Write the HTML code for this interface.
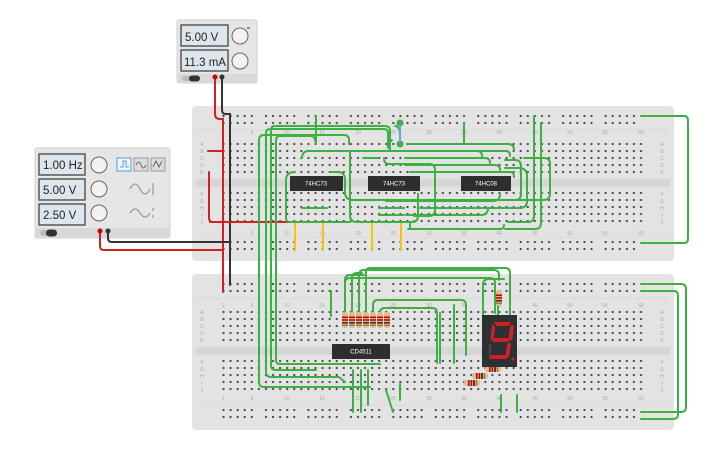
<!DOCTYPE html>
<html><head><meta charset="utf-8"><style>
html,body{margin:0;padding:0;background:#fff;width:725px;height:453px;overflow:hidden}
svg{display:block}
</style></head><body>
<svg width="725" height="453" viewBox="0 0 725 453" xmlns="http://www.w3.org/2000/svg" font-family="Liberation Sans, sans-serif">
<defs>
<pattern id="h" x="220" y="141" width="7.076" height="7" patternUnits="userSpaceOnUse"><circle cx="3.5" cy="3" r="1.15" fill="#4a4a4a"/></pattern>
<pattern id="r" x="220" y="113" width="42.46" height="7" patternUnits="userSpaceOnUse">
<circle cx="3.5" cy="3" r="1.15" fill="#4a4a4a"/><circle cx="10.58" cy="3" r="1.15" fill="#4a4a4a"/><circle cx="17.65" cy="3" r="1.15" fill="#4a4a4a"/><circle cx="24.73" cy="3" r="1.15" fill="#4a4a4a"/><circle cx="31.8" cy="3" r="1.15" fill="#4a4a4a"/></pattern>
<pattern id="h2" x="220" y="309" width="7.076" height="7" patternUnits="userSpaceOnUse"><circle cx="3.5" cy="3" r="1.15" fill="#4a4a4a"/></pattern>
<pattern id="r2" x="220" y="281" width="42.46" height="7" patternUnits="userSpaceOnUse">
<circle cx="3.5" cy="3" r="1.15" fill="#4a4a4a"/><circle cx="10.58" cy="3" r="1.15" fill="#4a4a4a"/><circle cx="17.65" cy="3" r="1.15" fill="#4a4a4a"/><circle cx="24.73" cy="3" r="1.15" fill="#4a4a4a"/><circle cx="31.8" cy="3" r="1.15" fill="#4a4a4a"/></pattern>
<g id="res"><rect x="-3" y="-8" width="6" height="16" rx="2.5" fill="#dcbc8c"/><rect x="-3" y="-3.5" width="6" height="1.6" fill="#c00"/><rect x="-3" y="-0.8" width="6" height="1.6" fill="#c00"/><rect x="-3" y="2" width="6" height="1.6" fill="#333"/><rect x="-3" y="4.6" width="6" height="1.3" fill="#a07030"/></g>
<g id="resh"><rect x="-8" y="-3" width="16" height="6" rx="2.5" fill="#dcbc8c"/><rect x="-4" y="-3" width="1.6" height="6" fill="#c00"/><rect x="-1.4" y="-3" width="1.6" height="6" fill="#c00"/><rect x="1.2" y="-3" width="1.6" height="6" fill="#222"/><rect x="3.8" y="-3" width="1.3" height="6" fill="#a07030"/></g>
</defs>

<rect x="192" y="106" width="482" height="155" rx="4" fill="#e3e3e3"/>
<rect x="192" y="274" width="482" height="156" rx="4" fill="#e3e3e3"/>
<line x1="196" y1="183" x2="670" y2="183" stroke="#d6d6d6" stroke-width="8"/>
<line x1="196" y1="351" x2="670" y2="351" stroke="#d6d6d6" stroke-width="8"/>
<line x1="196" y1="130" x2="670" y2="130" stroke="#d8d8d8"/>
<line x1="196" y1="237" x2="670" y2="237" stroke="#d8d8d8"/>
<line x1="196" y1="298" x2="670" y2="298" stroke="#d8d8d8"/>
<line x1="196" y1="405" x2="670" y2="405" stroke="#d8d8d8"/>
<rect x="220" y="141" width="424" height="35" fill="url(#h)"/>
<rect x="220" y="191" width="424" height="35" fill="url(#h)"/>
<rect x="220" y="113" width="424" height="14" fill="url(#r)"/>
<rect x="220" y="241" width="424" height="14" fill="url(#r)"/>
<rect x="220" y="309" width="424" height="35" fill="url(#h2)"/>
<rect x="220" y="359" width="424" height="35" fill="url(#h2)"/>
<rect x="220" y="281" width="424" height="14" fill="url(#r2)"/>
<rect x="220" y="409" width="424" height="14" fill="url(#r2)"/>
<g font-size="5" fill="#aaa" text-anchor="middle">
<text x="223" y="134">1</text><text x="252" y="134">5</text><text x="287" y="134">10</text><text x="322" y="134">15</text><text x="358" y="134">20</text><text x="393" y="134">25</text><text x="429" y="134">30</text><text x="464" y="134">35</text><text x="499" y="134">40</text><text x="535" y="134">45</text><text x="570" y="134">50</text><text x="605" y="134">55</text><text x="641" y="134">60</text>
<text x="223" y="235">1</text><text x="252" y="235">5</text><text x="287" y="235">10</text><text x="322" y="235">15</text><text x="358" y="235">20</text><text x="393" y="235">25</text><text x="429" y="235">30</text><text x="464" y="235">35</text><text x="499" y="235">40</text><text x="535" y="235">45</text><text x="570" y="235">50</text><text x="605" y="235">55</text><text x="641" y="235">60</text>
<text x="223" y="307">1</text><text x="252" y="307">5</text><text x="287" y="307">10</text><text x="322" y="307">15</text><text x="358" y="307">20</text><text x="393" y="307">25</text><text x="429" y="307">30</text><text x="464" y="307">35</text><text x="499" y="307">40</text><text x="535" y="307">45</text><text x="570" y="307">50</text><text x="605" y="307">55</text><text x="641" y="307">60</text>
<text x="223" y="400">1</text><text x="252" y="400">5</text><text x="287" y="400">10</text><text x="322" y="400">15</text><text x="358" y="400">20</text><text x="393" y="400">25</text><text x="429" y="400">30</text><text x="464" y="400">35</text><text x="499" y="400">40</text><text x="535" y="400">45</text><text x="570" y="400">50</text><text x="605" y="400">55</text><text x="641" y="400">60</text>
</g>
<g font-size="5" fill="#aaa" text-anchor="middle">
<text x="202" y="146">A</text><text x="202" y="153">B</text><text x="202" y="160">C</text><text x="202" y="167">D</text><text x="202" y="174">E</text><text x="202" y="196">F</text><text x="202" y="203">G</text><text x="202" y="210">H</text><text x="202" y="217">I</text><text x="202" y="224">J</text>
<text x="662" y="146">A</text><text x="662" y="153">B</text><text x="662" y="160">C</text><text x="662" y="167">D</text><text x="662" y="174">E</text><text x="662" y="196">F</text><text x="662" y="203">G</text><text x="662" y="210">H</text><text x="662" y="217">I</text><text x="662" y="224">J</text>
<text x="202" y="314">A</text><text x="202" y="321">B</text><text x="202" y="328">C</text><text x="202" y="335">D</text><text x="202" y="342">E</text><text x="202" y="364">F</text><text x="202" y="371">G</text><text x="202" y="378">H</text><text x="202" y="385">I</text><text x="202" y="392">J</text>
<text x="662" y="314">A</text><text x="662" y="321">B</text><text x="662" y="328">C</text><text x="662" y="335">D</text><text x="662" y="342">E</text><text x="662" y="364">F</text><text x="662" y="371">G</text><text x="662" y="378">H</text><text x="662" y="385">I</text><text x="662" y="392">J</text>
</g>

<rect x="177" y="20" width="80" height="63" rx="2" fill="#e6e6e6" stroke="#d0d0d0"/>
<rect x="181" y="25" width="47" height="21" fill="#dce6ec" stroke="#444" stroke-width="1.3"/>
<rect x="181" y="50" width="47" height="21" fill="#dce6ec" stroke="#444" stroke-width="1.3"/>
<text x="185" y="41" font-size="11.5" fill="#222">5.00 V</text>
<text x="184" y="66" font-size="11.5" fill="#222">11.3 mA</text>
<circle cx="240" cy="36" r="8" fill="#f2f2f2" stroke="#666"/><circle cx="240" cy="61" r="8" fill="#f2f2f2" stroke="#666"/>
<rect x="247" y="27" width="3" height="2" fill="#3c3"/>
<rect x="178" y="74" width="78" height="9" fill="#d8d8d8"/>
<rect x="182" y="76" width="18" height="5" rx="2.5" fill="#bbb"/><rect x="189" y="75.5" width="11" height="6" rx="3" fill="#333"/>

<rect x="35" y="148" width="135" height="90" rx="2" fill="#e6e6e6" stroke="#d0d0d0"/>
<rect x="39" y="154" width="46" height="21" fill="#dce6ec" stroke="#444" stroke-width="1.3"/>
<rect x="39" y="179" width="46" height="21" fill="#dce6ec" stroke="#444" stroke-width="1.3"/>
<rect x="39" y="204" width="46" height="21" fill="#dce6ec" stroke="#444" stroke-width="1.3"/>
<text x="43" y="169" font-size="11.5" fill="#222">1.00 Hz</text>
<text x="43" y="194" font-size="11.5" fill="#222">5.00 V</text>
<text x="43" y="219" font-size="11.5" fill="#222">2.50 V</text>
<circle cx="99" cy="165" r="8" fill="#f2f2f2" stroke="#666"/><circle cx="99" cy="189" r="8" fill="#f2f2f2" stroke="#666"/><circle cx="99" cy="213" r="8" fill="#f2f2f2" stroke="#666"/>
<rect x="117" y="158" width="14" height="13" fill="#eef6fb" stroke="#4aa3d8"/>
<rect x="134" y="158" width="14" height="13" fill="#ddd" stroke="#999"/>
<rect x="151" y="158" width="14" height="13" fill="#ddd" stroke="#999"/>
<path d="M120 167h3v-6h3v6h3" fill="none" stroke="#4aa3d8"/>
<path d="M136 165q3-6 5 0t5 0" fill="none" stroke="#666"/>
<path d="M153 167l3-6l3 6l3-6" fill="none" stroke="#666"/>
<path d="M130 189q5-10 10 0t10 0" fill="none" stroke="#888"/><path d="M153 183v12" stroke="#888"/>
<path d="M130 213q5-8 10 0t10 0" fill="none" stroke="#888"/><path d="M153 208v3M153 215v3" stroke="#888"/>
<rect x="36" y="228" width="133" height="10" fill="#d8d8d8"/>
<rect x="40" y="230" width="17" height="6" rx="3" fill="#bbb"/><rect x="46" y="229.5" width="11" height="7" rx="3.5" fill="#333"/>

<g fill="none" stroke-width="2" stroke-linecap="round">
<path d="M215 78V114q0 5 5 5h3V292" stroke="#d42020"/>
<path d="M222 78V110q0 4 4 4h4V285" stroke="#333"/>
<path d="M100 232V246q0 4 4 4h119" stroke="#d42020"/>
<path d="M108 232V238q0 4 4 4h118" stroke="#333"/>
<path d="M208 151h15" stroke="#d42020"/>
<path d="M209 172V218q0 4 4 4h103" stroke="#d42020"/>
<path d="M210 222h10" stroke="#d42020"/>
</g>
<circle cx="215" cy="77" r="2.5" fill="#c00"/><circle cx="222" cy="77" r="2.5" fill="#333"/>
<circle cx="100" cy="231" r="2.5" fill="#c00"/><circle cx="108" cy="231" r="2.5" fill="#333"/>

<g stroke="#f1c40f" stroke-width="2"><path d="M295 222V251M323 222V251M372 222V251M401 222V251"/></g>

<g fill="none" stroke="#3cb043" stroke-width="2" stroke-linecap="round" stroke-linejoin="round">
<path d="M259 145V140q0-5 5-5h80q5 0 5 5v4"/>
<path d="M259 145V382q0 5 5 5h106"/>
<path d="M266 138V133q0-4 4-4h114q4 0 4 4v15"/>
<path d="M266 138V372q0 5 5 5h68l6 5"/>
<path d="M271 135V130q0-4 4-4h110q5 0 5 5v20"/>
<path d="M271 135V365q0 5 5 5h40"/>
<path d="M276 143V140q0-4 4-4h31q4 0 4 5"/>
<path d="M276 143V360q0 4 4 4h100"/>
<path d="M316 116V144"/>
<path d="M395 126q5 0 5 10v8"/>
<path d="M388 144l4-4"/>
<path d="M295 172q-9 0-9 8v38q0 4 4 4h60"/>
<path d="M330 172h8q7 0 7 8v12q0 8 8 8h190q7 0 7-6v-30q0-6-6-6h-20"/>
<path d="M302 158q0-7 7-7h90"/>
<path d="M400 151h106q4 0 4 5"/>
<path d="M350 151V215q0 7 7 7h55q6 0 6-6v-22"/>
<path d="M363 158h15"/>
<path d="M384 158q0 6 5 6h40q6 0 6 6v40q0 6-6 6h-15"/>
<path d="M302 208h25"/>
<path d="M316 222h20"/>
<path d="M386 201h25M379 208h25M379 215h25"/>
<path d="M402 151h75q5 0 5 5"/>
<path d="M405 158h80q5 0 5 5"/>
<path d="M405 165h90q5 0 5 5"/>
<path d="M410 172h100q4 0 4 5"/>
<path d="M408 144h100q6 0 6 6"/>
<path d="M464 123V144"/>
<path d="M505 160h10q6 0 6 6v28q0 6-6 6h-70"/>
<path d="M505 168h14q8 0 8 8v25q0 7-7 7h-100"/>
<path d="M488 208q0 7-7 7h-75"/>
<path d="M500 194q0 7-7 7h-100"/>
<path d="M508 222h20q6 0 6-6V116"/>
<path d="M505 229h30q6 0 6-6V123"/>
<path d="M408 229h20"/>
<path d="M641 116h43q4 0 4 5v118q0 4-4 4h-43"/>
<path d="M410 222V229h90q4 0 4-4"/>
<path d="M345 316V280q0-5 5-5h14"/>
<path d="M352 316V278q0-5 5-5h5"/>
<path d="M359 316V275q0-5 5-5h130q5 0 5 5v5"/>
<path d="M366 316V272q0-4 4-4h135q5 0 5 5v49"/>
<path d="M345 316V283q0-5 5-5h140q5 0 5 5v30"/>
<path d="M373 316V305q0-5 5-5h83q5 0 5 5v50"/>
<path d="M380 316V313q0-5 5-5h47q5 0 5 5v50"/>
<path d="M331 291V316"/>
<path d="M440 363V313"/>
<path d="M454 363V305"/>
<path d="M498 316V295"/>
<path d="M483 316V285q0-6 6-6h15"/>
<path d="M353 370V412M361 370V412M368 370V405"/>
<path d="M386 390l7 22"/>
<path d="M400 384V400"/>
<path d="M501 395V412M517 395V412"/>
<path d="M641 284h40q5 0 5 5v118q0 5-5 5h-40"/>
<path d="M641 291h33q4 0 4 5v118q0 5-5 5h-32"/>
</g>
<g fill="#3cb043"><circle cx="400" cy="123" r="3.5"/><circle cx="400" cy="144" r="3.5"/></g>
<path d="M400 124V143" stroke="#6aa0d8" stroke-width="2"/>

<g font-size="6" fill="#fff" text-anchor="middle">
<rect x="290" y="176" width="53" height="15" fill="#2e2e2e"/><text x="316" y="185.5">74HC73</text>
<rect x="368" y="176" width="52" height="15" fill="#2e2e2e"/><text x="394" y="185.5">74HC73</text>
<rect x="461" y="176" width="50" height="15" fill="#2e2e2e"/><text x="486" y="185.5">74HC08</text>
<rect x="332" y="344" width="58" height="15" fill="#2e2e2e"/><text x="361" y="353.5">CD4511</text>
</g>
<use href="#res" x="345" y="320"/><use href="#res" x="352" y="320"/><use href="#res" x="359" y="320"/><use href="#res" x="366" y="320"/><use href="#res" x="373" y="320"/><use href="#res" x="380" y="320"/><use href="#res" x="387" y="320"/>
<use href="#res" x="499" y="298"/>
<use href="#resh" x="493" y="369"/><use href="#resh" x="480" y="376"/><use href="#resh" x="472" y="383"/>
<rect x="482" y="315" width="35" height="52" fill="#2e3134"/>
<g fill="#d0202a">
<path d="M494 322h17l-2 4h-13z"/>
<path d="M492 324l3 3-1.5 12-3 2z"/>
<path d="M512 324l2 3-1.5 12-3 2-1-2 1.5-12z"/>
<path d="M492 340l2-2h14l1.5 2-2 2h-14z"/>
<path d="M509 342l2 2-1.5 12-3 2-1-2 1.5-11z"/>
<path d="M490 356l2-1h13l2 4h-18z"/>
</g>
<path d="M490 343l2 2-1.5 11-2 1 0-12z" fill="#444"/>
<circle cx="513" cy="359" r="1.5" fill="#d0202a"/>
</svg>
</body></html>
